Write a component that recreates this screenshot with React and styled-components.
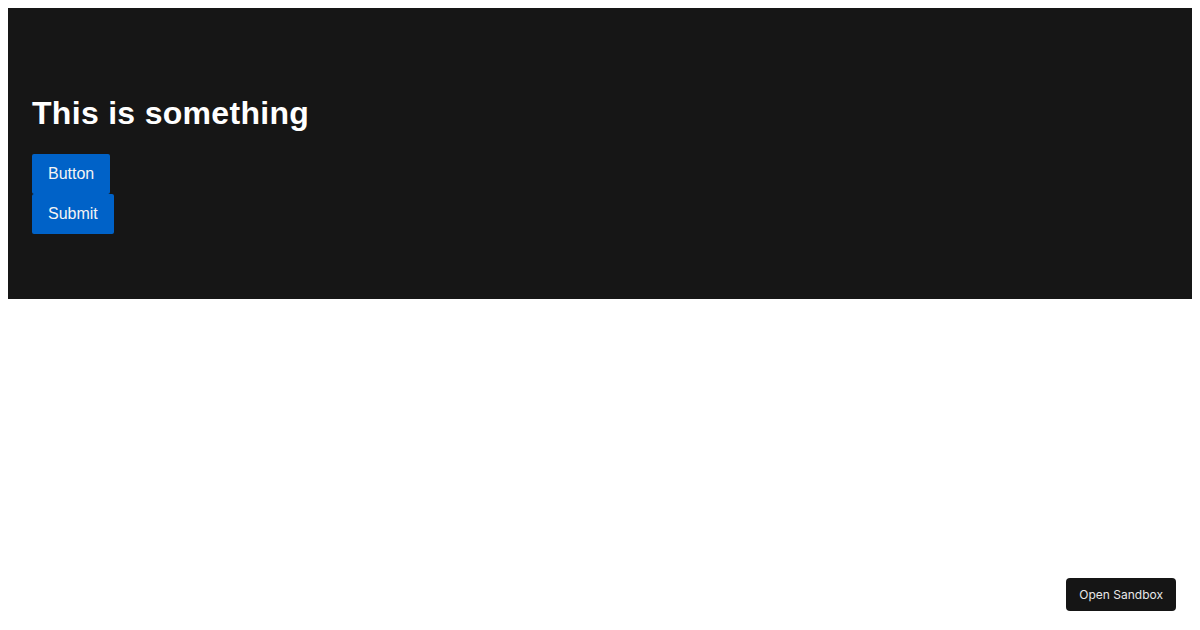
import React from "react";
import styled, { createGlobalStyle } from "styled-components";

const GlobalStyle = createGlobalStyle`
  body {
    margin: 8px;
    background: #ffffff;
    font-family: "Liberation Sans", Arial, sans-serif;
  }
`;

function App() {
  return (
    <>
      <GlobalStyle />
      <Hero>
        <Title>This is something</Title>
        <Actions>
          <Button>Button</Button>
          <Button>Submit</Button>
        </Actions>
      </Hero>
      <SandboxButton>Open Sandbox</SandboxButton>
    </>
  );
}

export default App;

const Hero = styled.section`
  background-color: #161616;
  padding: 64px 24px 65px;
  display: flex;
  flex-direction: column;
  align-items: flex-start;
`;

const Title = styled.h1`
  margin: 23px 0 23px;
  font-size: 32px;
  line-height: 36px;
  font-weight: 700;
  letter-spacing: 0.3px;
  color: #ffffff;
`;

const Actions = styled.div`
  display: flex;
  flex-direction: column;
  align-items: flex-start;
`;

const Button = styled.button`
  height: 40px;
  padding: 0 16px;
  border: none;
  border-radius: 2px;
  background-color: #0062c8;
  color: #f4f4f4;
  font-family: "Liberation Sans", Arial, sans-serif;
  font-size: 16px;
  cursor: pointer;
`;

const SandboxButton = styled.a`
  position: fixed;
  right: 24px;
  bottom: 19px;
  display: flex;
  align-items: center;
  height: 33px;
  padding: 0 13px;
  border-radius: 4px;
  background-color: #151515;
  color: #e8e8e8;
  font-family: Inter, "Liberation Sans", sans-serif;
  font-size: 12px;
  cursor: pointer;
`;
